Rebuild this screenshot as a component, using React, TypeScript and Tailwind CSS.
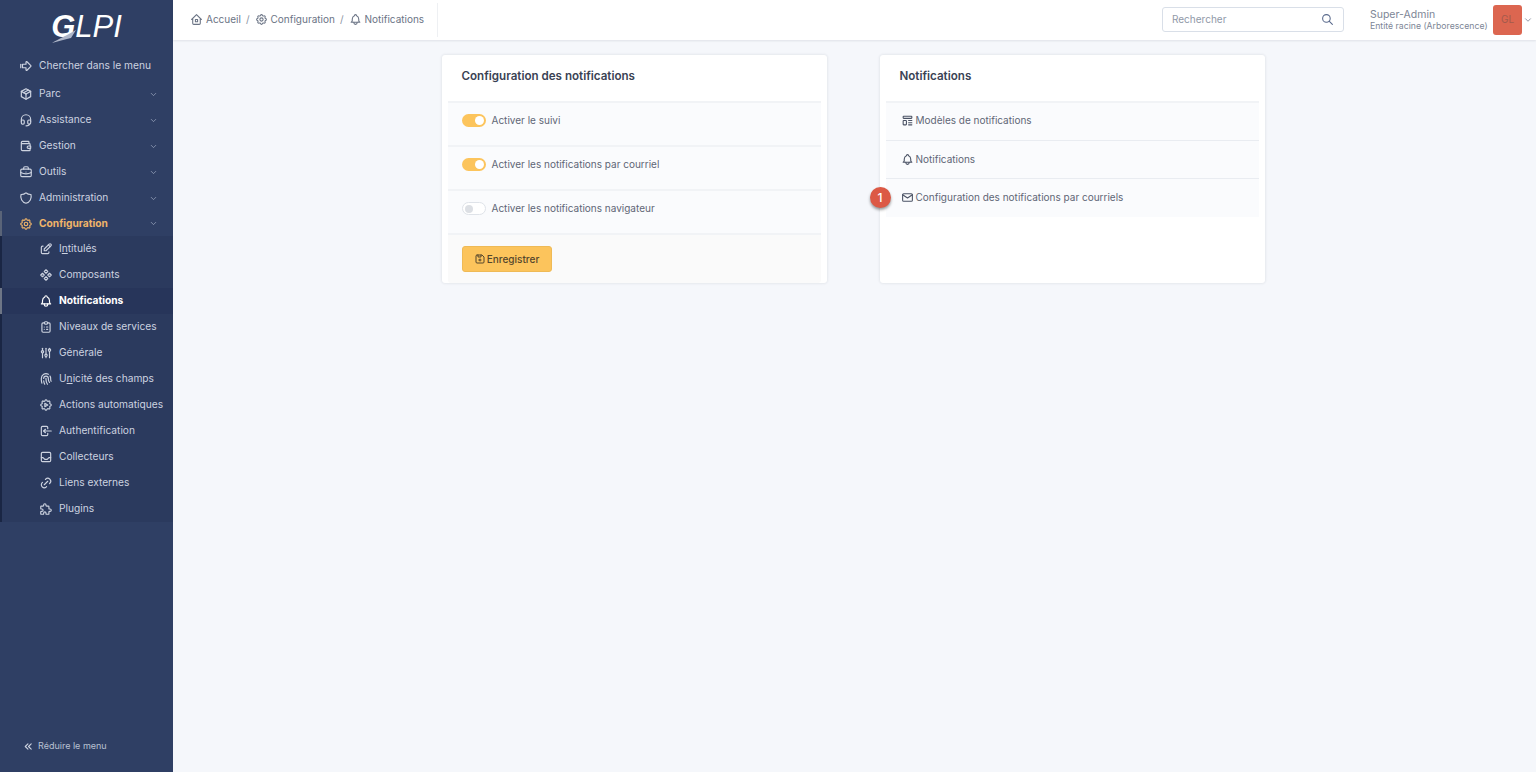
import React from 'react';
import {
  TbAdjustments,
  TbArrowBigRightLine,
  TbBell,
  TbBriefcase,
  TbChevronDown,
  TbChevronsLeft,
  TbClipboardList,
  TbComponents,
  TbDeviceFloppy,
  TbEdit,
  TbFingerprint,
  TbHeadset,
  TbHome2,
  TbInbox,
  TbLink,
  TbLogin,
  TbMail,
  TbPackage,
  TbPuzzle,
  TbSearch,
  TbSettings,
  TbSettingsAutomation,
  TbShield,
  TbTemplate,
  TbWallet,
} from 'react-icons/tb';

const mainMenu = [
  { label: 'Parc', icon: TbPackage },
  { label: 'Assistance', icon: TbHeadset },
  { label: 'Gestion', icon: TbWallet },
  { label: 'Outils', icon: TbBriefcase },
  { label: 'Administration', icon: TbShield },
];

const subMenu = [
  { label: <>I<span className="underline">n</span>titulés</>, icon: TbEdit },
  { label: 'Composants', icon: TbComponents },
  { label: 'Notifications', icon: TbBell, active: true },
  { label: 'Niveaux de services', icon: TbClipboardList },
  { label: 'Générale', icon: TbAdjustments },
  { label: <>U<span className="underline">n</span>icité des champs</>, icon: TbFingerprint },
  { label: 'Actions automatiques', icon: TbSettingsAutomation },
  { label: 'Authentification', icon: TbLogin },
  { label: 'Collecteurs', icon: TbInbox },
  { label: 'Liens externes', icon: TbLink },
  { label: 'Plugins', icon: TbPuzzle },
];

function Logo() {
  return (
    <div className="relative flex h-[53px] items-center justify-center pl-[0px]">
      <span className="text-[31px] leading-none italic text-white [font-family:'Liberation_Sans',sans-serif]">
        <span className="font-bold">G</span>LPI
      </span>
      <svg className="absolute left-[50px] top-[29px]" width="30" height="15" viewBox="0 0 30 15">
        <path d="M2 14 C 8 10, 16 7, 26 1 L 21 9 C 14 11, 8 12, 2 14 Z" fill="#aeb6c9" />
      </svg>
    </div>
  );
}

function Sidebar() {
  return (
    <aside className="flex h-[772px] w-[173px] shrink-0 flex-col bg-[#2f3f64] text-[10.2px] text-[#cdd3e0]">
      <Logo />
      <div className="flex h-[26px] items-center gap-[6px] pl-[19px]">
        <TbArrowBigRightLine className="h-[14px] w-[14px]" />
        <span>Chercher dans le menu</span>
      </div>
      <div className="h-[2px]" />
      {mainMenu.map((item) => (
        <div key={item.label} className="flex h-[26px] items-center pl-[19px] pr-[15px]">
          <item.icon className="h-[14px] w-[14px]" />
          <span className="ml-[6px] flex-1">{item.label}</span>
          <TbChevronDown className="h-[9px] w-[9px] text-[#9aa5bd]" />
        </div>
      ))}
      <div className="flex h-[25px] items-center border-l-2 border-[#5a6478] pl-[17px] pr-[15px] font-bold text-[#f0b469]">
        <TbSettings className="h-[14px] w-[14px]" />
        <span className="ml-[6px] flex-1">Configuration</span>
        <TbChevronDown className="h-[9px] w-[9px] text-[#9aa5bd]" />
      </div>
      <div className="border-l-2 border-[#1a2644] bg-[#2b3a5e]">
        {subMenu.map((item, i) =>
          item.active ? (
            <div key={i} className="-ml-[2px] flex h-[26px] items-center border-l-2 border-[#6e7686] bg-[#27355a] pl-[37px] font-bold text-white">
              <item.icon className="h-[14px] w-[14px]" />
              <span className="ml-[6px]">{item.label}</span>
            </div>
          ) : (
            <div key={i} className="flex h-[26px] items-center pl-[37px]">
              <item.icon className="h-[14px] w-[14px]" />
              <span className="ml-[6px] whitespace-nowrap">{item.label}</span>
            </div>
          ),
        )}
      </div>
      <div className="mt-auto mb-[13px] flex h-[26px] items-center pl-[22px] text-[9px] text-[#b9c1d2]">
        <TbChevronsLeft className="h-[13px] w-[13px] text-[#cdd3e0]" />
        <span className="ml-[3px]">Réduire le menu</span>
      </div>
    </aside>
  );
}

function Header() {
  return (
    <header className="flex h-[40px] items-center bg-white pr-[3px] pb-[1px] text-[10px] text-[#6b7485] shadow-[0_1px_2px_rgba(30,41,59,0.1)]">
      <nav className="flex h-[34px] w-[265px] items-center border-r border-[#eef0f3] pl-[17px]">
        <TbHome2 className="h-[13px] w-[13px]" />
        <span className="ml-[3px]">Accueil</span>
        <span className="mx-[5px] text-[#8a92a2]">/</span>
        <TbSettings className="h-[13px] w-[13px]" />
        <span className="ml-[3px]">Configuration</span>
        <span className="mx-[5px] text-[#8a92a2]">/</span>
        <TbBell className="h-[13px] w-[13px]" />
        <span className="ml-[3px]">Notifications</span>
      </nav>
      <div className="ml-auto flex h-[25px] w-[182px] items-center justify-between rounded-[3px] border border-[#d9dfe8] bg-white px-[9px] text-[#9099a8]">
        <span>Rechercher</span>
        <TbSearch className="h-[13px] w-[13px] text-[#5a6a8c]" />
      </div>
      <div className="ml-[26px] flex w-[117px] flex-col whitespace-nowrap text-[#7d8696]">
        <span className="text-[10.5px] leading-[13px]">Super-Admin</span>
        <span className="text-[8.7px] leading-[11px]">Entité racine (Arborescence)</span>
      </div>
      <div className="ml-[6px] flex h-[30px] w-[29px] items-center justify-center rounded-[3px] bg-[#dc6650] text-[#a35a4c]">
        GL
      </div>
      <TbChevronDown className="ml-[1px] h-[10px] w-[10px] text-[#7d8696]" />
    </header>
  );
}

function Switch({ on }: { on: boolean }) {
  return on ? (
    <span className="flex h-[13px] w-[24px] items-center justify-end rounded-full bg-[#fcc45c] pr-[2px]">
      <span className="h-[9px] w-[9px] rounded-full bg-white" />
    </span>
  ) : (
    <span className="flex h-[13px] w-[24px] items-center rounded-full border border-[#dfe3e9] bg-white pl-[2px]">
      <span className="h-[8px] w-[8px] rounded-full bg-[#dcdfe4]" />
    </span>
  );
}

function CardTitle({ children }: { children: React.ReactNode }) {
  return (
    <div className="flex h-[46px] items-center px-[20px] pb-[3px] text-[11.6px] font-semibold text-[#3a4254]">
      {children}
    </div>
  );
}

function ConfigCard() {
  const rows = [
    { label: 'Activer le suivi', on: true },
    { label: 'Activer les notifications par courriel', on: true },
    { label: 'Activer les notifications navigateur', on: false },
  ];
  return (
    <section className="h-[228px] w-[385px] rounded-[3px] bg-white shadow-[0_0_3px_rgba(30,41,59,0.14)]">
      <CardTitle>Configuration des notifications</CardTitle>
      <div className="mx-[6px]">
        {rows.map((row) => (
          <div key={row.label} className="flex h-[44px] gap-[6px] border-t-2 border-[#f1f3f6] bg-[#fafbfd] pl-[14px] pt-[11px]">
            <Switch on={row.on} />
            <span className="text-[10px] leading-[13px] text-[#5f6676]">{row.label}</span>
          </div>
        ))}
        <div className="h-[50px] rounded-b-[3px] border-t-2 border-[#f1f3f6] bg-[#fafafa] pl-[14px] pt-[11px]">
          <button className="flex h-[26px] w-[90px] items-center justify-center gap-[1px] rounded-[3px] border border-[#efba56] bg-[#fcc45c] text-[10px] font-medium text-[#54462c]">
            <TbDeviceFloppy className="h-[12px] w-[12px]" />
            Enregistrer
          </button>
        </div>
      </div>
    </section>
  );
}

function LinksCard() {
  const rows = [
    { label: 'Modèles de notifications', icon: TbTemplate },
    { label: 'Notifications', icon: TbBell },
    { label: 'Configuration des notifications par courriels', icon: TbMail },
  ];
  return (
    <section className="relative h-[228px] w-[385px] rounded-[3px] bg-white shadow-[0_0_3px_rgba(30,41,59,0.14)]">
      <CardTitle>Notifications</CardTitle>
      <div className="mx-[6px]">
        {rows.map((row, i) => (
          <div key={row.label} className={`flex h-[38.5px] items-center gap-[2px] bg-[#fafbfd] pl-[15px] text-[10px] text-[#5f6676] ${i === 0 ? 'border-t-2 border-[#f1f3f6] pb-[1px]' : 'border-t border-[#e9ecf1]'}`}>
            <row.icon className="h-[13px] w-[13px] text-[#4a5264]" />
            {row.label}
          </div>
        ))}
      </div>
      <span className="absolute left-[-10px] top-[132px] flex h-[21px] w-[21px] items-center justify-center rounded-full bg-[#dc5945] text-[12px] font-medium text-white shadow-[0_2px_3px_rgba(0,0,0,0.4)]">
        1
      </span>
    </section>
  );
}

export default function App() {
  return (
    <div className="flex h-[772px] w-[1536px] overflow-hidden bg-[#f5f7fb] font-['Inter',sans-serif]">
      <Sidebar />
      <main className="flex-1">
        <Header />
        <div className="flex justify-center gap-[53px] pt-[15px] pr-[3px]">
          <ConfigCard />
          <LinksCard />
        </div>
      </main>
    </div>
  );
}
